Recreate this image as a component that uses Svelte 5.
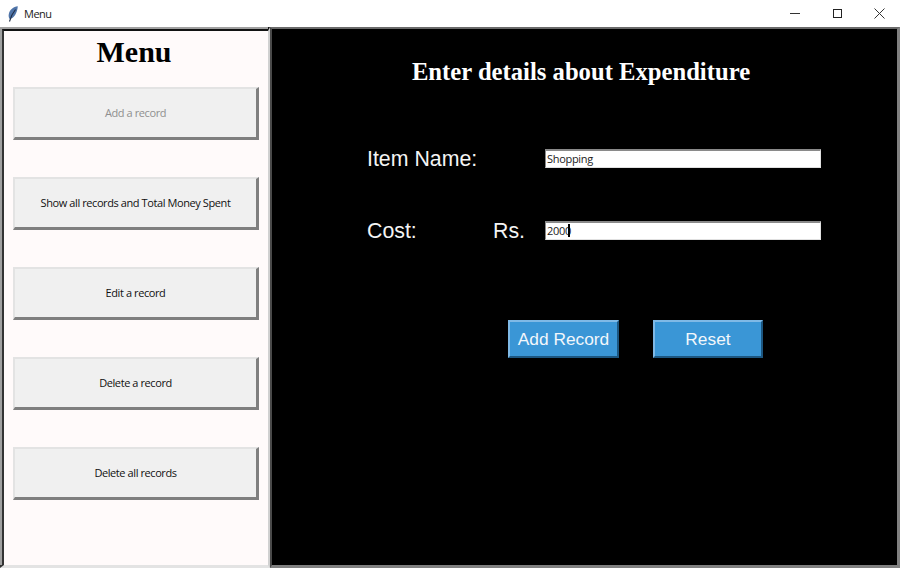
<script>
  const menu = [
    { label: 'Add a record', disabled: true },
    { label: 'Show all records and Total Money Spent' },
    { label: 'Edit a record' },
    { label: 'Delete a record' },
    { label: 'Delete all records' }
  ];
</script>

<div class="window">
  <header class="titlebar">
    <svg class="feather" width="12" height="16" viewBox="0 0 12 16">
      <path d="M9.800 .3C5.500 .6 1.600 3.800.8 8c-.4 2-.1 3.800.9 5C6 12.500 9.300 7 9.800.3z" fill="#4f74a8"/>
      <path d="M7.500 3.500C5 6.500 3 9.800 1.500 15.500" fill="none" stroke="#1f2d44" stroke-width="1.100"/>
    </svg>
    <span class="wintitle">Menu</span>
    <div class="caption">
      <span class="capbtn"><svg width="11" height="11" viewBox="0 0 11 11"><path d="M0 5.500h10" stroke="#333" fill="none"/></svg></span>
      <span class="capbtn"><svg width="11" height="11" viewBox="0 0 11 11"><rect x="1.500" y="1.500" width="8" height="8" stroke="#222" fill="none"/></svg></span>
      <span class="capbtn"><svg width="11" height="11" viewBox="0 0 11 11"><path d="M.5.500l10 10M10.500.500l-10 10" stroke="#333" fill="none"/></svg></span>
    </div>
  </header>

  <div class="body">
    <aside class="sidebar">
      <h1>Menu</h1>
      <div class="menu">
        {#each menu as item}
          <button class="menubtn" class:disabled={item.disabled}>{item.label}</button>
        {/each}
      </div>
    </aside>

    <main class="main">
      <h2>Enter details about Expenditure</h2>
      <div class="form">
        <div class="row">
          <label class="name" for="item">Item Name:</label>
          <span class="prefix"></span>
          <input id="item" value="Shopping" />
        </div>
        <div class="row">
          <label class="name" for="cost">Cost:</label>
          <span class="prefix">Rs.</span>
          <div class="field">
            <input id="cost" value="2000" />
            <span class="caret"></span>
          </div>
        </div>
      </div>
      <div class="actions">
        <button class="action">Add Record</button>
        <button class="action">Reset</button>
      </div>
    </main>
  </div>
</div>

<style>
  :global(body) { margin: 0; background: #fff; }
  .window { width: 900px; height: 568px; display: flex; flex-direction: column; overflow: hidden; }
  .titlebar { height: 27px; display: flex; align-items: center; background: #fff; padding-left: 8px; box-sizing: border-box; }
  .feather { margin-right: 4px; margin-top: 1px; }
  .wintitle { font: 11px/1 "Open Sans", "Noto Sans", sans-serif; color: #1a1a1a; letter-spacing: -0.5px; margin-top: -1px; }
  .caption { margin-left: auto; display: flex; }
  .capbtn { width: 42px; height: 27px; display: flex; align-items: center; justify-content: center; }

  .body { flex: 1; display: flex; min-height: 0; }

  .sidebar {
    width: 270px; box-sizing: border-box; background: #fffafa;
    border-style: solid; border-width: 4px 2px 3px 4px;
    border-color: #111 #d0d0d0 #e3e3e3 #333;
    padding: 0 9px;
    position: relative;
  }
  .sidebar::before {
    content: ""; position: absolute; left: -4px; right: 0; top: -4px; height: 2px; background: #a0a0a0;
  }
  .sidebar::after {
    content: ""; position: absolute; left: -4px; top: -4px; bottom: 0; width: 2px; background: #a0a0a0;
  }
  h1 {
    margin: 0 4px 0 0; text-align: center; height: 56px; padding-top: 3px; box-sizing: border-box;
    font: bold 30px/36px "Liberation Serif", serif; color: #000;
  }
  .menu { display: flex; flex-direction: column; gap: 37px; }
  .menubtn {
    width: 246px; height: 53px; box-sizing: border-box; padding: 0 0 2px;
    background: #f0f0f0; color: #111;
    border-style: solid; border-width: 2px 3px 3px 2px;
    border-color: #e3e3e3 #7f7f7f #7f7f7f #e3e3e3;
    font: 11px "Open Sans", "Noto Sans", sans-serif; letter-spacing: -0.41px;
  }
  .menubtn.disabled { color: #8f8f8f; }

  .main {
    flex: 1; box-sizing: border-box; background: #000;
    border-style: solid; border-width: 2px 3px 3px 2px;
    border-color: #6a6a6a #808080 #808080 #4a4a4a;
    display: flex; flex-direction: column;
  }
  h2 {
    margin: 0; padding: 29px 0 0; width: 618px; text-align: center; box-sizing: border-box;
    font: bold 24.67px/28px "Liberation Serif", serif; color: #fff; height: 120px;
  }
  .form { display: flex; flex-direction: column; gap: 53px; padding-left: 95px; }
  .row { display: flex; align-items: center; height: 19px; }
  .name { width: 126px; font: 21.33px/24px "Liberation Sans", sans-serif; color: #f4f4f4; white-space: nowrap; }
  .prefix { width: 52px; font: 21.33px/24px "Liberation Sans", sans-serif; color: #f4f4f4; }
  input {
    width: 276px; height: 19px; box-sizing: border-box; margin: 0; padding: 0 0 2px 1px;
    background: #fff; color: #222; outline: none;
    border-style: solid; border-width: 2px 1px 1px 1px;
    border-color: #8a8a8a #e0e0e0 #e0e0e0 #8a8a8a;
    font: 11px "Open Sans", "Noto Sans", sans-serif; letter-spacing: -0.3px;
  }
  .field { position: relative; display: flex; width: 276px; height: 19px; }
  .caret { position: absolute; left: 23px; top: 3px; width: 2px; height: 13px; background: #000; }
  .actions { display: flex; gap: 34px; padding: 80px 0 0 236px; }
  .action {
    width: 111px; height: 38px; box-sizing: border-box; padding: 0;
    background: #3a96d6; color: #f2f7fb;
    border-style: solid; border-width: 2px;
    border-color: #7fb9e6 #1c5680 #1c5680 #7fb9e6;
    font: 17.33px "Liberation Sans", sans-serif;
  }
  .action + .action { width: 110px; }
</style>
